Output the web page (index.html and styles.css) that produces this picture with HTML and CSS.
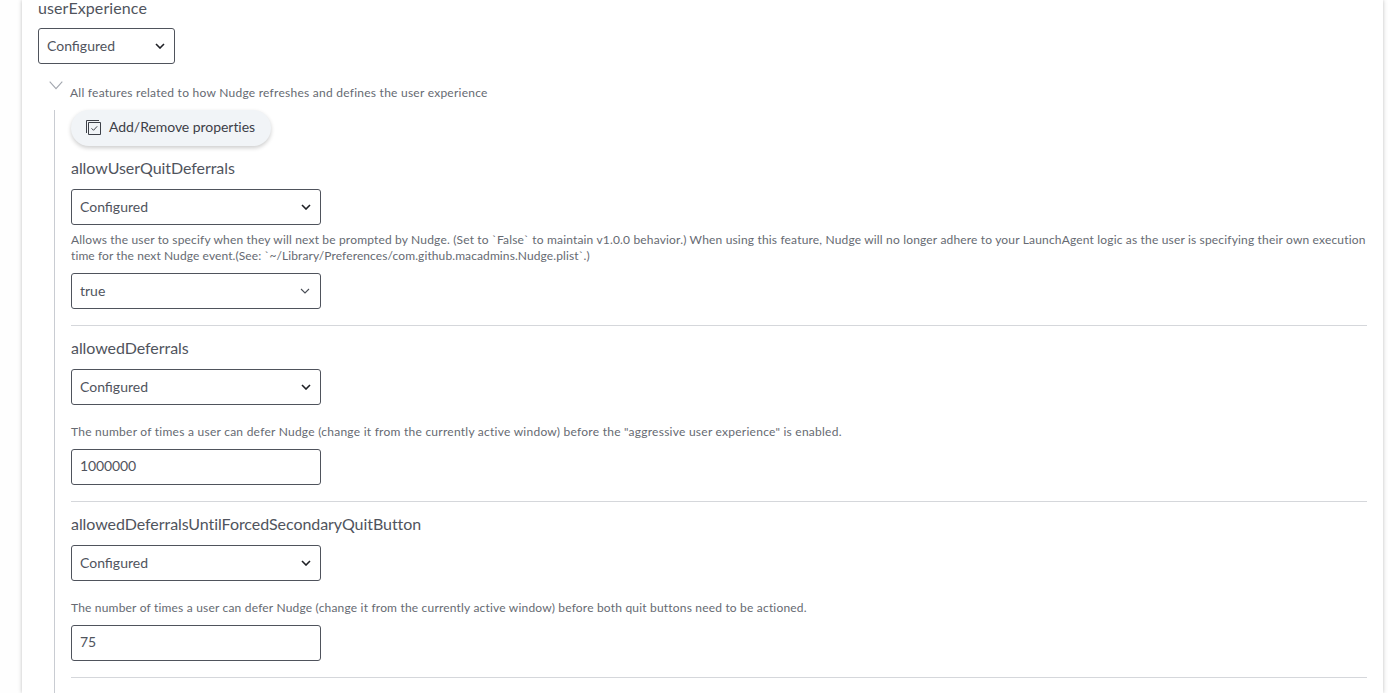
FILE: index.html
```html
<!DOCTYPE html>
<html lang="en">
<head>
<meta charset="utf-8">
<title>userExperience</title>
<link rel="stylesheet" href="styles.css">
</head>
<body>
<main class="card">
  <h2 class="title top-title">userExperience</h2>
  <div class="select small"><span>Configured</span>
    <svg class="chev" viewBox="0 0 10 6"><path d="M1 1l4 4 4-4"/></svg>
  </div>
  <div class="group-head">
    <svg class="collapse" viewBox="0 0 14 9"><path d="M.7.7L7 7.6 13.3.7"/></svg>
    <p class="desc group-desc">All features related to how Nudge refreshes and defines the user experience</p>
  </div>
  <div class="group">
    <button class="pill" type="button">
      <svg class="pill-icon" viewBox="0 0 15 15"><path d="M.5 13V.5H13M2.500 14.500V2.500h12v12zM5.500 8.300l2 2 3.700-4"/></svg>
      <span>Add/Remove properties</span>
    </button>
    <section class="prop">
      <h3 class="title">allowUserQuitDeferrals</h3>
      <div class="select"><span>Configured</span>
        <svg class="chev" viewBox="0 0 10 6"><path d="M1 1l4 4 4-4"/></svg>
      </div>
      <p class="desc two-line"><span class="line-one">Allows the user to specify when they will next be prompted by Nudge. (Set to `False` to maintain v1.0.0 behavior.) When using this feature, Nudge will no longer adhere to your LaunchAgent logic as the user is specifying their own execution</span><br><span class="line-two">time for the next Nudge event.(See: `~/Library/Preferences/com.github.macadmins.Nudge.plist`.)</span></p>
      <div class="select"><span>true</span>
        <svg class="chev thin" viewBox="0 0 10 6"><path d="M1 1l4 4 4-4"/></svg>
      </div>
    </section>
    <section class="prop">
      <h3 class="title">allowedDeferrals</h3>
      <div class="select"><span>Configured</span>
        <svg class="chev" viewBox="0 0 10 6"><path d="M1 1l4 4 4-4"/></svg>
      </div>
      <p class="desc one-line">The number of times a user can defer Nudge (change it from the currently active window) before the "aggressive user experience" is enabled.</p>
      <div class="select"><span class="value">1000000</span></div>
    </section>
    <section class="prop">
      <h3 class="title">allowedDeferralsUntilForcedSecondaryQuitButton</h3>
      <div class="select"><span>Configured</span>
        <svg class="chev" viewBox="0 0 10 6"><path d="M1 1l4 4 4-4"/></svg>
      </div>
      <p class="desc one-line tight">The number of times a user can defer Nudge (change it from the currently active window) before both quit buttons need to be actioned.</p>
      <div class="select"><span class="value">75</span></div>
    </section>
  </div>
</main>
</body>
</html>
```
FILE: styles.css
```css
* { box-sizing: border-box; }
html, body { margin: 0; height: 693px; overflow: hidden; background: #fefefe; }
body { font-family: Lato, "Open Sans", sans-serif; color: #50545d; }
.card {
  margin-left: 22px;
  width: 1361px;
  height: 693px;
  background: #fff;
  box-shadow: 0 0 4px rgba(0, 0, 0, 0.25);
  padding: 0 16px;
  overflow: hidden;
}
.title { margin: 0 0 12px; font-size: 16px; font-weight: 400; line-height: 18px; letter-spacing: -0.06px; color: #50545d; }
.top-title { line-height: 16px; margin-bottom: 12px; letter-spacing: 0.1px; }
.select {
  width: 250px;
  height: 36px;
  border: 1px solid #4f535c;
  border-radius: 3px;
  padding: 0 8px;
  display: flex;
  align-items: center;
  justify-content: space-between;
  font-size: 14px;
  background: #fff;
}
.select span { padding-bottom: 2px; }
.select .value { padding-bottom: 3px; letter-spacing: -0.1px; }
.select.small { width: 137px; }
.chev { width: 10px; height: 6px; margin-right: 1px; fill: none; stroke: #1f2126; stroke-width: 1.6; }
.chev.thin { stroke: #4a4e57; stroke-width: 1.1; margin-right: 2px; }
.group-head { display: flex; height: 46px; }
.collapse { width: 14px; height: 9px; margin: 17px 0 0 11px; fill: none; stroke: #a3a7af; stroke-width: 1.1; }
.desc { margin: 0; font-size: 12px; line-height: 16px; color: #666a72; letter-spacing: 0.25px; white-space: nowrap; }
.group-desc { margin: 21px 0 0 7px; }
.group { margin-left: 16px; padding-left: 16px; border-left: 1px solid #c9ccd2; height: 600px; }
.pill {
  display: flex;
  align-items: center;
  gap: 7px;
  width: 200px;
  height: 36px;
  padding: 0 0 0 16px;
  border: 0;
  border-radius: 18px;
  background: #f1f4f7;
  box-shadow: 0 2px 4px rgba(0, 0, 0, 0.2);
  font: inherit;
  font-size: 14px;
  letter-spacing: -0.05px;
  color: #3d4048;
}
.pill span { padding-bottom: 3px; }
.pill-icon { width: 15px; height: 15px; margin-left: -1px; margin-right: 1px; margin-top: -2px; fill: none; stroke: #3d4048; stroke-width: 1; }
.prop { padding: 13px 0 16px; border-bottom: 1px solid #d5d7db; }
.two-line { margin: 7px 0 9px; }
.line-one { letter-spacing: 0.17px; }
.line-two { letter-spacing: 0.1px; }
.one-line { margin: 19px 0 9px; }
.one-line.tight { letter-spacing: 0.19px; }
```
